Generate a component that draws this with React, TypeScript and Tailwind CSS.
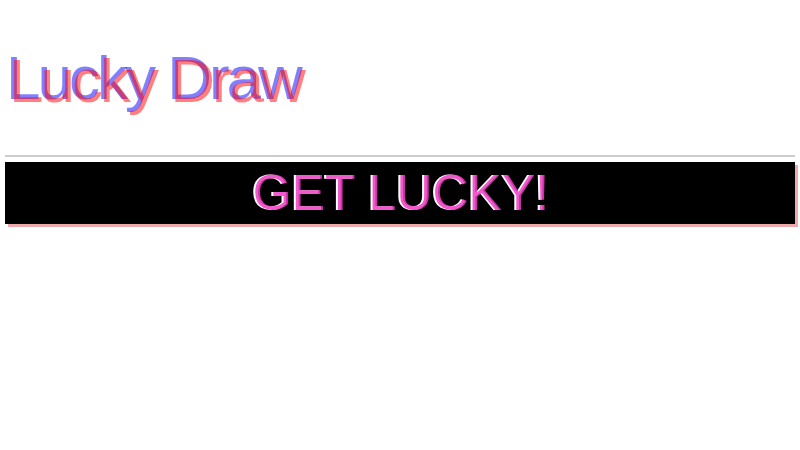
export default function App() {
  return (
    <main className="px-[5px] pt-[43px] pb-10 font-['Liberation_Sans',Arial,sans-serif]">
      <h1 className="pl-1 text-[62px] leading-[76px] tracking-[-3px] text-[#ff0000]/50 [text-shadow:-3px_-3px_0_rgba(0,0,255,0.5)]">
        Lucky Draw
      </h1>
      <hr className="mt-9 border-t-2 border-[#cccccc]" />
      <button
        type="button"
        className="mt-[5px] block w-full bg-black py-[2px] pl-[2px] text-[50px] leading-[58px] text-[#f03cc3]/85 [box-shadow:3px_3px_0_#eeaaaa] [text-shadow:-2px_0_0_#ffffff]"
      >
        GET LUCKY!
      </button>
    </main>
  );
}
